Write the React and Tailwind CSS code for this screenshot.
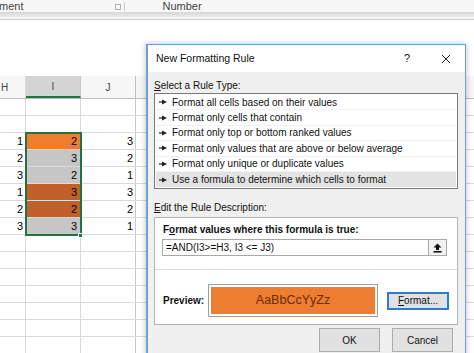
import React from "react";

const RULES = [
  "Format all cells based on their values",
  "Format only cells that contain",
  "Format only top or bottom ranked values",
  "Format only values that are above or below average",
  "Format only unique or duplicate values",
  "Use a formula to determine which cells to format",
];

// H, I, J values plus the fill of the I cell
const DATA = [
  { h: 1, i: 2, j: 3, fill: "bg-[#ed7d31]" },
  { h: 2, i: 3, j: 2, fill: "bg-[#c6c6c6]" },
  { h: 3, i: 2, j: 1, fill: "bg-[#c6c6c6]" },
  { h: 1, i: 3, j: 3, fill: "bg-[#c0602b]" },
  { h: 2, i: 2, j: 2, fill: "bg-[#c0602b]" },
  { h: 3, i: 3, j: 1, fill: "bg-[#c6c6c6]" },
];

const RuleArrow = () => (
  <svg width="8" height="6" viewBox="0 0 8 6" className="mr-[5px] shrink-0">
    <path d="M0 3h4" stroke="#222" strokeWidth="1.2" />
    <polygon points="3,0.5 8,3 3,5.5" fill="#222" />
  </svg>
);

const Row = ({ h, i, j, fill }) => (
  <div className="flex h-[17px] border-b border-[#dadada]">
    <div className="w-[26px] shrink-0 border-r border-[#dadada] text-right pr-[2px] leading-[17px]">{h}</div>
    <div className={`w-[55px] shrink-0 border-r border-[#dadada] text-right pr-[3px] leading-[17px] ${fill || ""}`}>
      {i}
    </div>
    <div className="w-[55px] shrink-0 border-r border-[#c8c8c8] text-right pr-[2px] leading-[17px]">{j}</div>
    <div className="flex-1" />
  </div>
);

const Sheet = () => (
  <div className="relative w-[474px] h-[353px] bg-white overflow-hidden font-['Liberation_Sans',Arial,sans-serif]">
    {/* ribbon tail */}
    <div className="h-[12px] bg-[#f7f7f7] flex items-end text-[11px] leading-[12px] text-[#444]">
      <span className="-ml-[1px]">ment</span>
      <span className="ml-[92px] mb-[2px] w-[6px] h-[6px] border border-[#b0b0b0]" />
      <span className="ml-[3px] mb-[1px] w-px h-[9px] bg-[#c8c8c8]" />
      <span className="ml-[37px]">Number</span>
    </div>
    <div className="h-[5px] bg-gradient-to-b from-[#d6d6d6] to-[#ececec]" />
    <div className="h-[3px] bg-[#f3f3f3] border-b border-[#cfcfcf]" />
    <div className="h-[56px] bg-white" />

    {/* column headers */}
    <div className="flex h-[23px] bg-[#f6f6f6] border-b border-[#bdbdbd] text-[10px] text-[#444]">
      <div className="w-[26px] border-r border-[#dadada] flex items-center pl-[1px]">H</div>
      <div className="w-[55px] bg-[#d4d4d4] border-r border-[#c8c8c8] border-b-2 border-b-[#217346] flex items-center justify-center">
        I
      </div>
      <div className="w-[55px] border-r border-[#bdbdbd] flex items-center justify-center">J</div>
      <div className="flex-1" />
    </div>

    {/* grid */}
    <div className="relative text-[11px] text-black">
      <Row />
      <Row />
      {DATA.map((d, k) => (
        <Row key={k} {...d} />
      ))}
      {Array.from({ length: 8 }).map((_, k) => (
        <Row key={"e" + k} />
      ))}
      {/* selection outline I3:I8 */}
      <div className="absolute left-[25px] top-[33px] w-[57px] h-[104px] border-2 border-[#217346] pointer-events-none" />
      <div className="absolute left-[78px] top-[134px] w-[5px] h-[5px] bg-[#217346] border border-white" />
    </div>

    <Dialog />
  </div>
);

const UploadIcon = () => (
  <svg width="9" height="10" viewBox="0 0 9 10">
    <polygon points="4.5,0.5 8.5,4.5 6,4.5 6,7 3,7 3,4.5 0.5,4.5" fill="#111" />
    <rect x="0.5" y="8" width="8" height="1.6" fill="#111" />
  </svg>
);

const Dialog = () => (
  <div className="absolute left-[146px] top-[44px] w-[320px] h-[320px] border border-[#6d9fd8] border-l-2 bg-[#f0f0f0] shadow-[0_0_6px_rgba(0,0,0,0.25)] text-[10px] text-[#111]">
    {/* title bar */}
    <div className="h-[27px] bg-white flex items-center pl-[8px] pr-[14px] text-[10.5px]">
      <span className="flex-1">New Formatting Rule</span>
      <span className="mr-[31px] text-[11px]">?</span>
      <svg width="10" height="10" viewBox="0 0 10 10">
        <path d="M1 1l8 8M9 1l-8 8" stroke="#222" strokeWidth="1" />
      </svg>
    </div>

    <div className="pl-[6px] pr-[7px]">
      <div className="h-[21px] flex items-center pt-[5px]">
        <span>
          <span className="underline">S</span>elect a Rule Type:
        </span>
      </div>

      <div className="border border-[#7a7a7a] bg-white py-[1px] px-[1px]">
        {RULES.map((r, k) => (
          <div
            key={r}
            className={`h-[15.4px] flex items-center pl-[3px] ${
              k === RULES.length - 1 ? "bg-[#e3e3e3]" : "border-b border-[#f2f2f2]"
            }`}
          >
            <RuleArrow />
            {r}
          </div>
        ))}
      </div>

      <div className="h-[28px] flex items-center pt-[9px]">
        <span>
          <span className="underline">E</span>dit the Rule Description:
        </span>
      </div>

      <div className="border border-[#b4b4b4] bg-white h-[108px] flex flex-col">
        <div className="px-[8px]">
          <div className="h-[21px] flex items-center pt-[1px] font-bold">
            <span>
              F<span className="underline">o</span>rmat values where this formula is true:
            </span>
          </div>
          <div className="flex h-[17px] border border-[#a8a8a8] bg-white -ml-[1px] mr-[2px]">
            <div className="flex-1 flex items-center pl-[3px] text-[10px]">=AND(I3&gt;=H3, I3 &lt;= J3)</div>
            <div className="w-[18px] border-l border-[#a8a8a8] bg-[#f2f2f2] flex items-center justify-center">
              <UploadIcon />
            </div>
          </div>
        </div>
        <div className="mt-[13px] border-t border-[#dcdcdc]" />
        <div className="flex items-center px-[8px] pt-[14px]">
          <span className="font-bold w-[45px]">Preview:</span>
          <div className="w-[170px] h-[33px] border border-[#a0a0a0] p-[2px] bg-white">
            <div className="w-full h-full bg-[#ed7d31] flex items-center justify-center text-[12.5px] text-[#6b2a08]">
              AaBbCcYyZz
            </div>
          </div>
          <div className="ml-[9px] w-[62px] h-[18px] border-2 border-[#2a7bd4] bg-[#e1e1e1] flex items-center justify-center">
            <span>
              <span className="underline">F</span>ormat...
            </span>
          </div>
        </div>
      </div>

      <div className="flex justify-end gap-[12px] mt-[3px] pr-[5px]">
        <div className="w-[61px] h-[24px] bg-[#e1e1e1] border border-[#adadad] flex items-center justify-center">OK</div>
        <div className="w-[61px] h-[24px] bg-[#e1e1e1] border border-[#adadad] flex items-center justify-center">
          Cancel
        </div>
      </div>
    </div>
  </div>
);

export default function App() {
  return <Sheet />;
}
